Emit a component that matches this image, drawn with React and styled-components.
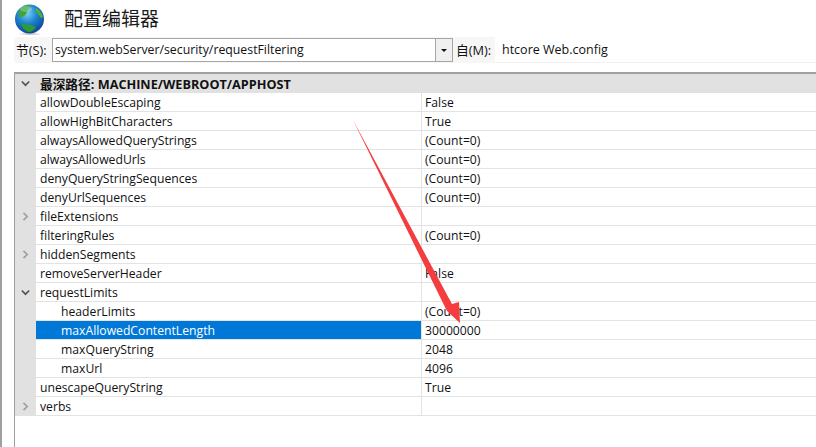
import React from "react";
import styled, { createGlobalStyle } from "styled-components";

const Global = createGlobalStyle`
  html, body { margin: 0; padding: 0; background: #fff; overflow: hidden; }
  #root { width: 816px; height: 447px; }
`;

const FONT = `"Open Sans", "Noto Sans", "Noto Sans CJK SC", sans-serif`;

const Page = styled.div`
  position: relative;
  width: 816px;
  height: 447px;
  box-sizing: border-box;
  border-left: 2px solid #a0a0a0;
  padding-left: 12px;
  background: #fff;
  font-family: ${FONT};
  font-size: 12.2px;
  color: #111;
  overflow: hidden;
`;

const TitleBar = styled.div`
  display: flex;
  align-items: center;
  height: 37px;
  gap: 18px;
`;

const Title = styled.h1`
  margin: 0 0 2px;
  font-size: 19px;
  line-height: 35px;
  font-weight: 400;
  font-family: "Noto Sans CJK SC", sans-serif;
  color: #1a1a1a;
`;

const Filters = styled.div`
  display: flex;
  align-items: center;
  height: 26px;
  background: #f6f6f6;
  border-radius: 4px;
`;

const Label = styled.label`
  width: 38px;
  flex: none;
  box-sizing: border-box;
  padding-left: 2px;
  padding-bottom: 2px;
  font-size: 12.8px;
  white-space: nowrap;
  font-family: ${FONT};
`;

const Combo = styled.div`
  display: flex;
  width: 401px;
  height: 24px;
  flex: none;
  box-sizing: border-box;
  border: 1px solid #a6a6a6;
  background: #fff;
`;

const ComboText = styled.div`
  flex: 1;
  padding-left: 2px;
  line-height: 21px;
  font-size: 12.3px;
`;

const ComboButton = styled.div`
  width: 16px;
  border-left: 1px solid #a6a6a6;
  background: #f0f0f0;
  display: flex;
  align-items: center;
  justify-content: center;
  &::after {
    content: "";
    border-left: 3px solid transparent;
    border-right: 3px solid transparent;
    border-top: 3px solid #111;
  }
`;

const PathLabel = styled(Label)`
  width: 42px;
  padding-left: 3px;
`;

const PathValue = styled.div`
  flex: 1;
  align-self: stretch;
  background: #fff;
  padding-left: 7px;
  line-height: 25px;
  font-size: 12.5px;
  border-bottom: 1px solid #f2f2f2;
  box-sizing: border-box;
`;

const Grid = styled.div`
  margin-top: 9px;
  border-top: 2px solid #a0a0a0;
  border-left: 1px solid #a0a0a0;
  height: 375px;
  box-sizing: border-box;
`;

const HeaderRow = styled.div`
  display: flex;
  align-items: center;
  height: 19px;
  background: #e1e1e1;
  font-weight: 700;
  font-size: 12.7px;
`;

const Gutter = styled.div`
  width: 21px;
  flex: none;
  align-self: stretch;
  background: #e1e1e1;
  display: flex;
  align-items: center;
  justify-content: center;
`;

const HeaderText = styled.div`
  padding-left: 4px;
  white-space: nowrap;
`;

const Row = styled.div`
  display: flex;
  height: 19px;
`;

const NameCell = styled.div`
  width: 385px;
  flex: none;
  box-sizing: border-box;
  padding-left: ${(p) => (p.$child ? 25 : 4)}px;
  line-height: 20px;
  border-bottom: 1px solid #e3e3e3;
  background: ${(p) => (p.$selected ? "#0078d7" : "#fff")};
  color: ${(p) => (p.$selected ? "#fff" : "#111")};
  white-space: nowrap;
`;

const ValueCell = styled.div`
  flex: 1;
  box-sizing: border-box;
  padding-left: 3px;
  line-height: 20px;
  border-left: 1px solid #e3e3e3;
  border-bottom: 1px solid #e3e3e3;
`;

const Overlay = styled.svg`
  position: absolute;
  left: -2px;
  top: 0;
  pointer-events: none;
`;

const Chevron = ({ open }) => (
  <svg width="9" height="9" viewBox="0 0 9 9" fill="none" stroke={open ? "#555" : "#a0a0a0"} strokeWidth="1.7">
    {open ? <path d="M0.8 2.5 L4.5 6.2 L8.2 2.5" /> : <path d="M2.5 0.8 L6.2 4.5 L2.5 8.2" />}
  </svg>
);

const Globe = () => (
  <svg width="32" height="32" viewBox="0 0 32 32">
    <defs>
      <radialGradient id="sea" cx="0.42" cy="0.3" r="0.75">
        <stop offset="0" stopColor="#7fd0f2" />
        <stop offset="0.45" stopColor="#1f86cf" />
        <stop offset="1" stopColor="#0b3f8f" />
      </radialGradient>
      <radialGradient id="shadow" cx="0.5" cy="0.5" r="0.5">
        <stop offset="0" stopColor="#888" stopOpacity="0.6" />
        <stop offset="1" stopColor="#888" stopOpacity="0" />
      </radialGradient>
    </defs>
    <ellipse cx="16" cy="31" rx="12" ry="2" fill="url(#shadow)" />
    <circle cx="15.5" cy="16" r="14.5" fill="url(#sea)" />
    <path d="M5 8 C8 3 13 1.5 17 2 C16 5 14 6 13 9 C12 13 9 13 7 15 C5 13 4 11 5 8Z" fill="#3fa535" />
    <path d="M22 5 C25 6 28 10 29 14 C27 17 26 13 24 11 C22 9 21 7 22 5Z" fill="#4eae3a" />
    <path d="M7 21 C11 20 17 22 22 24 C20 27 18 29 14 29 C10 27 8 24 7 21Z" fill="#2f9a3a" />
    <ellipse cx="12" cy="6" rx="6" ry="3" fill="#fff" opacity="0.25" />
  </svg>
);

const rows = [
  { name: "allowDoubleEscaping", value: "False" },
  { name: "allowHighBitCharacters", value: "True" },
  { name: "alwaysAllowedQueryStrings", value: "(Count=0)" },
  { name: "alwaysAllowedUrls", value: "(Count=0)" },
  { name: "denyQueryStringSequences", value: "(Count=0)" },
  { name: "denyUrlSequences", value: "(Count=0)" },
  { name: "fileExtensions", value: "", toggle: "closed" },
  { name: "filteringRules", value: "(Count=0)" },
  { name: "hiddenSegments", value: "", toggle: "closed" },
  { name: "removeServerHeader", value: "False" },
  { name: "requestLimits", value: "", toggle: "open" },
  { name: "headerLimits", value: "(Count=0)", child: true },
  { name: "maxAllowedContentLength", value: "30000000", child: true, selected: true },
  { name: "maxQueryString", value: "2048", child: true },
  { name: "maxUrl", value: "4096", child: true },
  { name: "unescapeQueryString", value: "True" },
  { name: "verbs", value: "", toggle: "closed" },
];

export default function App() {
  return (
    <Page>
      <Global />
      <TitleBar>
        <Globe />
        <Title>配置编辑器</Title>
      </TitleBar>
      <Filters>
        <Label>节(S):</Label>
        <Combo>
          <ComboText>system.webServer/security/requestFiltering</ComboText>
          <ComboButton />
        </Combo>
        <PathLabel>自(M):</PathLabel>
        <PathValue>htcore Web.config</PathValue>
      </Filters>
      <Grid>
        <HeaderRow>
          <Gutter><Chevron open /></Gutter>
          <HeaderText>最深路径: MACHINE/WEBROOT/APPHOST</HeaderText>
        </HeaderRow>
        {rows.map((r) => (
          <Row key={r.name}>
            <Gutter>{r.toggle && <Chevron open={r.toggle === "open"} />}</Gutter>
            <NameCell $child={r.child} $selected={r.selected}>{r.name}</NameCell>
            <ValueCell>{r.value}</ValueCell>
          </Row>
        ))}
      </Grid>
      <Overlay width="816" height="447" viewBox="0 0 816 447">
        <path d="M353 120 L442 301 L447 311 L460 323 L459 302 L452 304 Z" fill="#f53c3f" />
      </Overlay>
    </Page>
  );
}
